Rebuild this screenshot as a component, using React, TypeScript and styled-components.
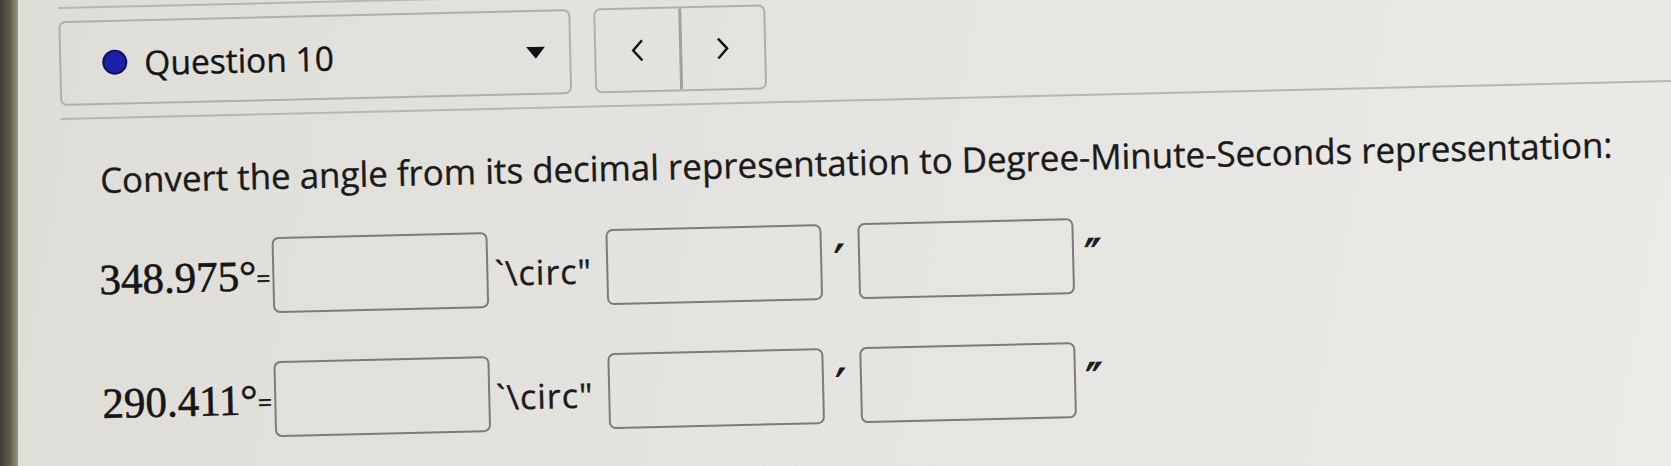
import React from "react";
import styled, { createGlobalStyle } from "styled-components";

const GlobalStyle = createGlobalStyle`
  html, body {
    margin: 0;
    padding: 0;
    overflow: hidden;
  }
  body {
    font-family: "Open Sans", "Liberation Sans", sans-serif;
    color: #1b1b1b;
    -webkit-text-stroke: 0.35px currentColor;
  }
`;

const Frame = styled.div`
  display: flex;
  width: 1671px;
  height: 466px;
  overflow: hidden;
`;

// dark monitor edge on the left of the photo
const Bezel = styled.div`
  width: 18px;
  flex: none;
  background: linear-gradient(90deg, #3d3d33 0%, #5f5e4c 55%, #9a9884 100%);
`;

const Screen = styled.div`
  flex: 1;
  overflow: hidden;
  background: linear-gradient(100deg, #dfddd8 0%, #e5e3df 45%, #ebeae6 100%);
`;

// the photo is taken slightly crooked
const Tilted = styled.div`
  width: 1720px;
  transform: rotate(-1.35deg);
  transform-origin: 0 0;
`;

const Rule = styled.div<{ $top: number }>`
  margin: ${(p) => p.$top}px 0 0 40px;
  height: 2px;
  background: #b8b6b1;
`;

const Header = styled.div`
  display: flex;
  gap: 23px;
  margin: 12px 0 0 40px;
  height: 85px;
`;

const Dropdown = styled.div`
  width: 512px;
  box-sizing: border-box;
  border: 2px solid #b1afaa;
  border-radius: 7px;
  display: flex;
  align-items: center;
  padding: 0 24px 0 41px;
`;

const Dot = styled.span`
  width: 25px;
  height: 25px;
  box-sizing: border-box;
  border-radius: 50%;
  background: #1d20a6;
  border: 2px solid #10125e;
  flex: none;
`;

const Title = styled.span`
  margin-left: 17px;
  font-size: 33.5px;
  color: #141414;
  flex: 1;
`;

const Nav = styled.div`
  width: 172px;
  box-sizing: border-box;
  border: 2px solid #b1afaa;
  border-radius: 7px;
  display: flex;
`;

const NavButton = styled.div<{ $divider?: boolean }>`
  flex: 1;
  display: flex;
  align-items: center;
  justify-content: center;
  border-left: ${(p) => (p.$divider ? "3px solid #a3a19c" : "none")};
`;

const Question = styled.div`
  margin: 37px 0 0 78px;
  font-size: 34.9px;
  line-height: 48px;
  white-space: nowrap;
  color: #1a1a1a;
`;

const Row = styled.div<{ $top: number }>`
  display: flex;
  align-items: center;
  margin: ${(p) => p.$top}px 0 0 75px;
`;

const Number = styled.span`
  font-family: "Liberation Serif", "DejaVu Serif", serif;
  font-size: 43px;
  color: #161616;
  -webkit-text-stroke: 0.6px currentColor;
`;

const Equals = styled.span`
  font-size: 25px;
  padding-top: 4px;
`;

const AnswerBox = styled.div`
  width: 216px;
  height: 76px;
  box-sizing: border-box;
  border: 2px solid #7c7b78;
  border-radius: 7px;
  margin-left: 2px;
`;

const Unit = styled.span`
  width: 116px;
  box-sizing: border-box;
  padding: 6px 0 0 6px;
  font-size: 34px;
  letter-spacing: 1px;
  white-space: nowrap;
`;

const Prime = styled.span`
  width: 34px;
  align-self: flex-start;
  margin-top: 15px;
  text-align: center;
  font-family: "DejaVu Sans", sans-serif;
  font-size: 46px;
  line-height: 1;
  -webkit-text-stroke: 1px currentColor;
`;

const TrailPrime = styled(Prime)`
  width: auto;
  margin-left: 10px;
`;

const Arrow = () => (
  <svg width="19" height="12" viewBox="0 0 19 12">
    <polygon points="0,0 19,0 9.5,12" fill="#111" />
  </svg>
);

const Chevron = ({ dir }: { dir: "left" | "right" }) => (
  <svg width="13" height="24" viewBox="0 0 13 24">
    <polyline
      points={dir === "left" ? "11,2 2,12 11,22" : "2,2 11,12 2,22"}
      fill="none"
      stroke="#161616"
      strokeWidth="2.5"
    />
  </svg>
);

const rows = [
  { value: "348.975", top: 37 },
  { value: "290.411", top: 48 },
];

export default function App() {
  return (
    <Frame>
      <GlobalStyle />
      <Bezel />
      <Screen>
        <Tilted>
          <Rule $top={8} />
          <Header>
            <Dropdown>
              <Dot />
              <Title>Question 10</Title>
              <Arrow />
            </Dropdown>
            <Nav>
              <NavButton>
                <Chevron dir="left" />
              </NavButton>
              <NavButton $divider>
                <Chevron dir="right" />
              </NavButton>
            </Nav>
          </Header>
          <Rule $top={12} />
          <Question>
            Convert the angle from its decimal representation to Degree-Minute-Seconds representation:
          </Question>
          {rows.map((r) => (
            <Row key={r.value} $top={r.top}>
              <Number>{r.value}°</Number>
              <Equals>=</Equals>
              <AnswerBox />
              <Unit>`\circ"</Unit>
              <AnswerBox />
              <Prime>′</Prime>
              <AnswerBox />
              <TrailPrime>″</TrailPrime>
            </Row>
          ))}
        </Tilted>
      </Screen>
    </Frame>
  );
}
